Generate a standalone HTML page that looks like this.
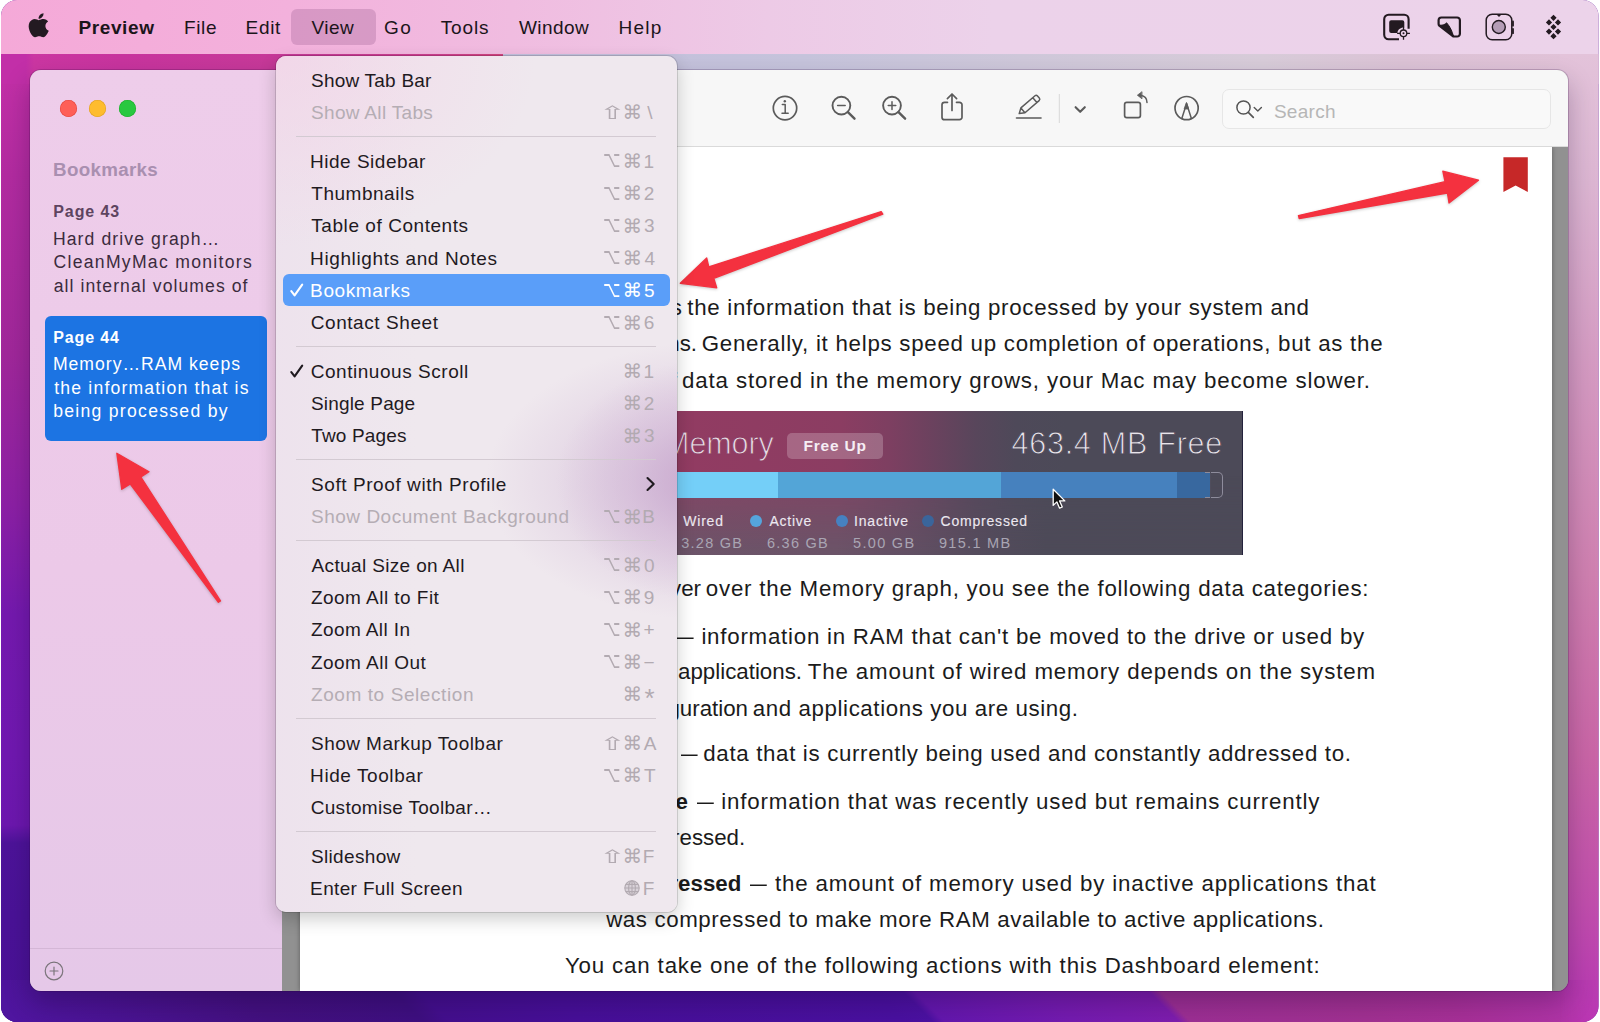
<!DOCTYPE html>
<html lang="en">
<head>
<meta charset="utf-8">
<title>Preview — View menu</title>
<style>
*{box-sizing:border-box;margin:0;padding:0}
html,body{width:1600px;height:1022px;overflow:hidden;background:#fff}
body{font-family:"Liberation Sans",sans-serif;position:relative;color:#1d1d1f}
.abs{position:absolute}
.t{position:absolute;white-space:nowrap;display:block}
svg{position:absolute;overflow:visible}
#screen{position:absolute;left:0;top:0;width:1600px;height:1022px;overflow:hidden;background:#5a1a9a;
  clip-path:inset(0px 1.5px 0px 1px round 16px)}
#wall{position:absolute;left:0;top:0;width:1600px;height:1022px}
#menubar{position:absolute;left:0;top:0;width:1600px;height:54.3px;
  background:linear-gradient(90deg,#f5a9d8 0%,#f3b1dc 18%,#f0bce0 32%,#edcae6 48%,#ecd2ea 62%,#ecd3ea 100%)}
#viewhl{position:absolute;left:290.5px;top:9px;width:85px;height:36px;border-radius:6px;background:rgba(110,50,105,.2)}
#winshadow{position:absolute;left:30px;top:70px;width:1538px;height:921px;border-radius:11px;
  box-shadow:0 0 0 1px rgba(40,0,60,.2),0 12px 26px 0 rgba(20,0,40,.27)}
#win{position:absolute;left:30px;top:70px;width:1538px;height:921px;border-radius:11px;overflow:hidden;background:#919191}
#sidebar{position:absolute;left:0;top:0;width:252.3px;height:921px;background:linear-gradient(180deg,#eecdea 0,#ecc9e8 500px,#e5c8e8 921px)}
#sbline{position:absolute;left:0;top:878px;width:252.3px;height:1px;background:#d4b7d6}
.tl{position:absolute;top:29.5px;width:17px;height:17px;border-radius:50%}
#toolbar{position:absolute;left:253px;top:0;width:1285px;height:77px;background:#f7f7f7;border-bottom:1px solid #dadada}
#docbg{position:absolute;left:253px;top:77px;width:1285px;height:844px;background:#919191}
#page{position:absolute;left:270px;top:77px;width:1252px;height:844px;background:#fff;box-shadow:0 0 5px rgba(0,0,0,.35)}
#sel{position:absolute;left:15px;top:246px;width:222.3px;height:124.5px;border-radius:6px;background:#1c74e3}
#search{position:absolute;left:1191.5px;top:18.5px;width:329px;height:40.5px;border-radius:7px;background:#f9f9f9;border:1px solid #e6e6e6}
#menu{position:absolute;left:275.8px;top:55.5px;width:401.5px;height:856px;border-radius:10px;overflow:hidden;
  background:#efe8ee}
#menushadow{position:absolute;left:275.8px;top:55.5px;width:401.5px;height:856px;border-radius:10px;
  box-shadow:0 0 0 1px rgba(0,0,0,.13),0 7px 18px rgba(0,0,0,.2)}
.sep{position:absolute;left:20.2px;width:360.5px;height:1px;background:#d3cad2}
#hl{position:absolute;left:7.2px;top:218px;width:386.7px;height:32px;border-radius:6px;background:#5a9ef9}
</style>
</head>
<body>
<div id="screen">
<div id="wall">
<div class="abs" style="left:0;top:54px;width:40px;height:968px;background:linear-gradient(180deg,#c530a8 0px,#b22ba0 120px,#a0279a 300px,#8c20a4 450px,#7419ae 560px,#7018b0 700px,#6c17ae 771px,#4d1399 789px,#4a1297 860px,#4a1196 968px)"></div>
<div class="abs" style="left:0;top:54px;width:506px;height:30px;background:linear-gradient(90deg,#c22fa8 0,#c22fa8 26px,#cb36a2 34px,#c8349e 120px,#c73a98 300px,#cd3f8e 440px,#d2457f 506px)"></div>
<div class="abs" style="left:503px;top:54px;width:1097px;height:30px;background:linear-gradient(90deg,#c2bfdc 0,#c6c4dc 300px,#cfc8da 520px,#d8ccd9 760px,#dcc3d6 900px,#e2c2d8 1097px)"></div>
<div class="abs" style="left:1560px;top:54px;width:40px;height:968px;background:linear-gradient(180deg,#e3c3da 0,#dcb5d2 130px,#d59cc3 300px,#cf80b0 520px,#c965a6 700px,#c04eac 850px,#b93cb2 940px,#bd36b6 968px)"></div>
<div class="abs" style="left:0;top:980px;width:1600px;height:42px;-webkit-mask-image:linear-gradient(90deg,#000 0,#000 1560px,transparent 1600px);mask-image:linear-gradient(90deg,#000 0,#000 1560px,transparent 1600px);background:linear-gradient(45deg,#4f159f 15px,#43107f 192px,#3e0f80 300px,#440f8e 318px,#470f98 411px,#4a10a0 640px,#4c11a2 660px,#6417ae 668px,#751bb0 760px,#7e1dae 834px,#9d2f94 842px,#a23192 969px,#a83098 1040px,#b436ae 1146px)"></div>
</div>
<div id="menubar">
<div id="viewhl"></div>
<svg style="left:30.3px;top:12.6px" width="20.500" height="24.500" viewBox="0 0 170 200"><path fill="#231a21" d="M150.4 155.9c-2.9 6.8-6.4 13-10.400 18.800-5.500 7.800-10 13.300-13.500 16.300-5.400 5-11.200 7.500-17.400 7.700-4.500 0-9.800-1.300-16.100-3.800-6.300-2.500-12-3.800-17.300-3.800-5.500 0-11.400 1.300-17.800 3.800-6.300 2.500-11.400 3.900-15.300 4-6 .3-11.900-2.400-17.900-7.900-3.800-3.300-8.600-9-14.300-17.100-6.100-8.600-11.200-18.600-15.100-30-4.200-12.300-6.400-24.300-6.400-35.800 0-13.200 2.900-24.600 8.600-34.200 4.500-7.700 10.500-13.700 18-18.200 7.500-4.400 15.600-6.700 24.300-6.900 4.800 0 11 1.500 18.800 4.400 7.700 2.900 12.700 4.400 14.900 4.400 1.600 0 7.200-1.700 16.500-5.200 8.900-3.200 16.400-4.500 22.500-4 16.600 1.300 29.100 7.900 37.400 19.700-14.900 9-22.200 21.600-22.100 37.800.1 12.600 4.700 23.100 13.700 31.400 4.100 3.900 8.600 6.800 13.700 9-1.100 3.200-2.300 6.200-3.500 9.200zM112.300 4c0 9.900-3.600 19.100-10.800 27.700-8.700 10.200-19.200 16-30.600 15.100-.1-1.200-.2-2.400-.2-3.700 0-9.500 4.100-19.700 11.500-28 3.700-4.200 8.300-7.700 14-10.500 5.600-2.700 11-4.300 16-4.500.1 1.300.1 2.600.1 3.900z"/></svg>
<span class="t" style="left:78.41px;top:14.70px;font-size:19px;line-height:25px;color:#1b151a;font-weight:bold;letter-spacing:0.616px;">Preview</span>
<span class="t" style="left:184.02px;top:14.70px;font-size:19px;line-height:25px;color:#1b151a;letter-spacing:0.613px;">File</span>
<span class="t" style="left:245.52px;top:14.70px;font-size:19px;line-height:25px;color:#1b151a;letter-spacing:0.693px;">Edit</span>
<span class="t" style="left:311.50px;top:14.70px;font-size:19px;line-height:25px;color:#1b151a;letter-spacing:0.476px;">View</span>
<span class="t" style="left:384.11px;top:14.70px;font-size:19px;line-height:25px;color:#1b151a;letter-spacing:1.315px;">Go</span>
<span class="t" style="left:440.70px;top:14.70px;font-size:19px;line-height:25px;color:#1b151a;letter-spacing:0.884px;">Tools</span>
<span class="t" style="left:519.00px;top:14.70px;font-size:19px;line-height:25px;color:#1b151a;letter-spacing:0.438px;">Window</span>
<span class="t" style="left:618.52px;top:14.70px;font-size:19px;line-height:25px;color:#1b151a;letter-spacing:1.226px;">Help</span>
<svg style="left:1380px;top:10px" width="34" height="34" viewBox="0 0 34 34" fill="none" stroke="#231a21">
<path d="M28.600 18.800V9.200a4.400 4.400 0 0 0-4.400-4.400H8.600a4.400 4.400 0 0 0-4.400 4.400v15.600a4.400 4.400 0 0 0 4.400 4.400h10.400" stroke-width="2.100"/>
<path d="M11.200 10.250h11.100a2 2 0 0 1 2 2v5.300c-3.700-.3-6.600 2-6.900 5.450h-6.200a2 2 0 0 1-2-2v-8.750a2 2 0 0 1 2-2z" fill="#231a21" stroke="none"/>
<circle cx="23.500" cy="23.300" r="3.300" stroke-width="1.300"/><circle cx="23.500" cy="23.300" r="1" fill="#231a21" stroke="none"/>
<path d="M23.500 16.900v3.100M23.500 26.600v3.100M17.100 23.300h3.100M26.800 23.300h3.100" stroke-width="1.300"/></svg>
<svg style="left:1434px;top:12px" width="30" height="28" viewBox="0 0 30 28" fill="none" stroke="#231a21" stroke-linejoin="round">
<path d="M4.600 8.300a2.800 2.800 0 0 1 2.800-2.800h15.700a2.800 2.800 0 0 1 2.800 2.800v13.400a2.800 2.800 0 0 1-2.800 2.800H19.500L5.300 13.700a2.600 2.600 0 0 1-.7-1.900z" stroke-width="2.200"/>
<path d="M6 13.200c2.800.2 5-.6 6.600-2.400 3.400 3.800 5.600 8.500 6.800 13.300z" fill="#231a21" stroke-width="1"/></svg>
<svg style="left:1483px;top:11px" width="34" height="32" viewBox="0 0 34 32" fill="none" stroke="#231a21">
<rect x="3.200" y="3.300" width="25.600" height="25.400" rx="6" stroke-width="1.500"/>
<circle cx="15.800" cy="16" r="6.500" fill="#b49db6" stroke-width="1.400"/>
<path d="M13.500 3.500h5l-2.500 2.600z" fill="#231a21" stroke="none"/>
<path d="M30 10.500v4.200M30 18v4.200" stroke-width="1.800" stroke-linecap="round"/></svg>
<svg style="left:0;top:0" width="1600" height="54"><path fill="#231a21" d="M1553.5 14.700000000000001l3.100 3.100l-3.100 3.100l-3.100-3.100zM1553.5 23.9l3.100 3.100l-3.100 3.100l-3.100-3.100zM1553.5 33.1l3.100 3.100l-3.100 3.100l-3.100-3.100zM1549 19.299999999999997l3.100 3.100l-3.100 3.100l-3.100-3.100zM1558 19.299999999999997l3.100 3.100l-3.100 3.100l-3.100-3.100zM1549 28.5l3.100 3.100l-3.100 3.100l-3.100-3.100zM1558 28.5l3.100 3.100l-3.100 3.100l-3.100-3.100z"/></svg>
</div>
<div id="winshadow"></div>
<div id="win">
<div id="docbg"></div>
<div id="page"></div>
<span class="t" style="right:886.0px;top:222.7px;font-size:22.3px;line-height:29px;color:#1b1b1b;">RAM keeps</span>
<span class="t" style="left:657.30px;top:222.70px;font-size:22.3px;line-height:29px;color:#1b1b1b;letter-spacing:0.687px;">the information that is being processed by your system and</span>
<span class="t" style="right:871.0px;top:259.0px;font-size:22.3px;line-height:29px;color:#1b1b1b;">applications.</span>
<span class="t" style="left:671.75px;top:259.00px;font-size:22.3px;line-height:29px;color:#1b1b1b;letter-spacing:0.728px;">Generally, it helps speed up completion of operations, but as the</span>
<span class="t" style="right:891.0px;top:295.6px;font-size:22.3px;line-height:29px;color:#1b1b1b;">amount of</span>
<span class="t" style="left:652.10px;top:295.60px;font-size:22.3px;line-height:29px;color:#1b1b1b;letter-spacing:0.841px;">data stored in the memory grows, your Mac may become slower.</span>
<span class="t" style="right:867.0px;top:504.0px;font-size:22.3px;line-height:29px;color:#1b1b1b;">If you hover</span>
<span class="t" style="left:675.80px;top:504.00px;font-size:22.3px;line-height:29px;color:#1b1b1b;letter-spacing:0.779px;">over the Memory graph, you see the following data categories:</span>
<span class="t" style="right:896.0px;top:551.5px;font-size:22.3px;line-height:29px;color:#1b1b1b;"><b>Wired</b></span>
<span class="t" style="left:647.30px;top:551.50px;font-size:22.3px;line-height:29px;color:#1b1b1b;transform:scaleX(0.744);transform-origin:0 50%;">—</span>
<span class="t" style="left:671.41px;top:551.50px;font-size:22.3px;line-height:29px;color:#1b1b1b;letter-spacing:0.759px;">information in RAM that can't be moved to the drive or used by</span>
<span class="t" style="right:766.0px;top:587.0px;font-size:22.3px;line-height:29px;color:#1b1b1b;">other applications.</span>
<span class="t" style="left:777.65px;top:587.00px;font-size:22.3px;line-height:29px;color:#1b1b1b;letter-spacing:0.866px;">The amount of wired memory depends on the system</span>
<span class="t" style="right:820.0px;top:623.5px;font-size:22.3px;line-height:29px;color:#1b1b1b;">configuration</span>
<span class="t" style="left:722.80px;top:623.50px;font-size:22.3px;line-height:29px;color:#1b1b1b;letter-spacing:0.592px;">and applications you are using.</span>
<span class="t" style="right:892.5px;top:669.0px;font-size:22.3px;line-height:29px;color:#1b1b1b;"><b>Active</b></span>
<span class="t" style="left:650.80px;top:669.00px;font-size:22.3px;line-height:29px;color:#1b1b1b;transform:scaleX(0.744);transform-origin:0 50%;">—</span>
<span class="t" style="left:673.30px;top:669.00px;font-size:22.3px;line-height:29px;color:#1b1b1b;letter-spacing:0.660px;">data that is currently being used and constantly addressed to.</span>
<span class="t" style="right:880.0px;top:717.0px;font-size:22.3px;line-height:29px;color:#1b1b1b;"><b>Inactive</b></span>
<span class="t" style="left:667.00px;top:717.00px;font-size:22.3px;line-height:29px;color:#1b1b1b;transform:scaleX(0.753);transform-origin:0 50%;">—</span>
<span class="t" style="left:691.31px;top:717.00px;font-size:22.3px;line-height:29px;color:#1b1b1b;letter-spacing:0.824px;">information that was recently used but remains currently</span>
<span class="t" style="right:822.8px;top:752.5px;font-size:22.3px;line-height:29px;color:#1b1b1b;">uncompressed.</span>
<span class="t" style="right:826.7px;top:799.2px;font-size:22.3px;line-height:29px;color:#1b1b1b;"><b>Compressed</b></span>
<span class="t" style="left:719.80px;top:799.20px;font-size:22.3px;line-height:29px;color:#1b1b1b;transform:scaleX(0.753);transform-origin:0 50%;">—</span>
<span class="t" style="left:745.00px;top:799.20px;font-size:22.3px;line-height:29px;color:#1b1b1b;letter-spacing:0.818px;">the amount of memory used by inactive applications that</span>
<span class="t" style="left:576.15px;top:835.30px;font-size:22.3px;line-height:29px;color:#1b1b1b;letter-spacing:0.604px;">was compressed to make more RAM available to active applications.</span>
<span class="t" style="left:534.95px;top:881.00px;font-size:22.3px;line-height:29px;color:#1b1b1b;letter-spacing:0.837px;">You can take one of the following actions with this Dashboard element:</span>
<div class="abs" style="left:606px;top:341.2px;width:607px;height:143.6px;background:linear-gradient(90deg,#933b62 0,#8f3c62 120px,#8b3d62 205px,#7d3f61 254px,#6a425e 298px,#58465b 340px,#4e4959 380px,#4c4a58 430px,#4c4a58 100%);box-shadow:inset -1px 0 0 #24223c"></div>
<div class="abs" style="left:606px;top:341.2px;width:606px;height:143.6px;background:linear-gradient(90deg,#6b5569 0,#6a5468 200px,#625064 270px,#554c5d 340px,#4d4a58 410px,#4c4a58 100%);-webkit-mask-image:linear-gradient(180deg,transparent 0,transparent 45%,rgba(0,0,0,.55) 62%,#000 100%);mask-image:linear-gradient(180deg,transparent 0,transparent 45%,rgba(0,0,0,.55) 62%,#000 100%)"></div>
<div class="abs" style="left:622px;top:401.6px;width:126px;height:26px;background:#74cff8"></div>
<div class="abs" style="left:748px;top:401.6px;width:223px;height:26px;background:#53a5d7"></div>
<div class="abs" style="left:971px;top:401.6px;width:176px;height:26px;background:#4681be"></div>
<div class="abs" style="left:1147px;top:401.6px;width:32.5px;height:26px;background:#38689f"></div>
<div class="abs" style="left:1175px;top:401.6px;width:17.5px;height:26px;border:1.2px solid #8e8c9c;border-left:none;border-radius:0 5px 5px 0"></div>
<div class="abs" style="left:1179.5px;top:401.6px;width:1.5px;height:26px;background:#4f4d5c"></div>
<span class="t" style="left:634.12px;top:353.20px;font-size:30.5px;line-height:40px;color:#e6dbe5;letter-spacing:-0.093px;-webkit-text-stroke:.9px #8c3d62;">Memory</span>
<div class="abs" style="left:757px;top:362.6px;width:96px;height:26.5px;border-radius:5px;background:rgba(255,255,255,.22)"></div>
<span class="t" style="left:773.43px;top:366.40px;font-size:15.5px;line-height:20px;color:#f6eef4;font-weight:bold;letter-spacing:0.811px;">Free Up</span>
<span class="t" style="left:981.52px;top:353.40px;font-size:30.5px;line-height:40px;color:#e8e4ea;letter-spacing:0.748px;-webkit-text-stroke:.9px #4d4959;">463.4 MB Free</span>
<div class="abs" style="left:633.7px;top:444.70000000000005px;width:12.6px;height:12.6px;border-radius:50%;background:#79d0f8"></div>
<div class="abs" style="left:719.7px;top:444.70000000000005px;width:12.6px;height:12.6px;border-radius:50%;background:#55a5dc"></div>
<div class="abs" style="left:805.6px;top:444.70000000000005px;width:12.6px;height:12.6px;border-radius:50%;background:#4681c1"></div>
<div class="abs" style="left:891.7px;top:444.70000000000005px;width:12.6px;height:12.6px;border-radius:50%;background:#3a659b"></div>
<span class="t" style="left:653.20px;top:441.80px;font-size:14px;line-height:18px;color:#ece8f0;letter-spacing:0.807px;-webkit-text-stroke:.12px #ece8f0;">Wired</span>
<span class="t" style="left:739.50px;top:441.80px;font-size:14px;line-height:18px;color:#ece8f0;letter-spacing:0.729px;-webkit-text-stroke:.12px #ece8f0;">Active</span>
<span class="t" style="left:823.91px;top:441.80px;font-size:14px;line-height:18px;color:#ece8f0;letter-spacing:0.845px;-webkit-text-stroke:.12px #ece8f0;">Inactive</span>
<span class="t" style="left:910.54px;top:441.80px;font-size:14px;line-height:18px;color:#ece8f0;letter-spacing:0.797px;-webkit-text-stroke:.12px #ece8f0;">Compressed</span>
<span class="t" style="left:651.25px;top:464.00px;font-size:14.5px;line-height:19px;color:#a9a5b3;letter-spacing:1.260px;">3.28 GB</span>
<span class="t" style="left:736.92px;top:464.00px;font-size:14.5px;line-height:19px;color:#a9a5b3;letter-spacing:1.281px;">6.36 GB</span>
<span class="t" style="left:823.05px;top:464.00px;font-size:14.5px;line-height:19px;color:#a9a5b3;letter-spacing:1.310px;">5.00 GB</span>
<span class="t" style="left:909.02px;top:464.00px;font-size:14.5px;line-height:19px;color:#a9a5b3;letter-spacing:1.289px;">915.1 MB</span>
<svg style="left:1015px;top:415px" width="30" height="30" viewBox="1045 485 30 30" ><path d="M1053.200 489.200v16.200l3.700-3.500l2.700 6.300l2.700-1.200l-2.700-6.100h5.200z" fill="#111" stroke="#fff" stroke-width="1.300" stroke-linejoin="round"/></svg>
<svg style="left:1470px;top:85px" width="32" height="40" viewBox="1500 155 32 40" ><path d="M1503.400 157.300h24.400v34.700l-12.200-6.600l-12.200 6.600z" fill="#c62828"/></svg>
<div id="sidebar">
<div class="tl" style="left:29.5px;background:#fe5f57;box-shadow:inset 0 0 0 .6px #e2463f"></div>
<div class="tl" style="left:59.2px;background:#febc2e;box-shadow:inset 0 0 0 .6px #dfa023"></div>
<div class="tl" style="left:89.0px;background:#28c840;box-shadow:inset 0 0 0 .6px #1dad2b"></div>
<span class="t" style="left:23.12px;top:88.30px;font-size:18.8px;line-height:24px;color:#a98fb0;font-weight:bold;letter-spacing:0.292px;">Bookmarks</span>
<span class="t" style="left:23.30px;top:131.00px;font-size:16px;line-height:21px;color:#5e4460;font-weight:bold;letter-spacing:0.902px;">Page 43</span>
<span class="t" style="left:22.92px;top:157.70px;font-size:17.6px;line-height:23px;color:#3b2b3d;letter-spacing:1.099px;">Hard drive graph…</span>
<span class="t" style="left:23.47px;top:181.20px;font-size:17.6px;line-height:23px;color:#3b2b3d;letter-spacing:1.289px;">CleanMyMac monitors</span>
<span class="t" style="left:23.75px;top:204.70px;font-size:17.6px;line-height:23px;color:#3b2b3d;letter-spacing:1.072px;">all internal volumes of</span>
<div id="sel"></div>
<span class="t" style="left:23.30px;top:256.60px;font-size:16px;line-height:21px;color:#fff;font-weight:bold;letter-spacing:0.836px;">Page 44</span>
<span class="t" style="left:22.92px;top:283.00px;font-size:17.6px;line-height:23px;color:#fff;letter-spacing:1.000px;">Memory…RAM keeps</span>
<span class="t" style="left:24.30px;top:306.80px;font-size:17.6px;line-height:23px;color:#fff;letter-spacing:1.181px;">the information that is</span>
<span class="t" style="left:23.20px;top:330.00px;font-size:17.6px;line-height:23px;color:#fff;letter-spacing:1.280px;">being processed by</span>
<div id="sbline"></div>
<svg style="left:14.399999999999999px;top:890.5px" width="20" height="20" viewBox="0 0 20 20" fill="none" stroke="#7b757b" stroke-width="1.200"><circle cx="10" cy="10" r="8.800"/><path d="M10 6v8M6 10h8" stroke-linecap="round"/></svg>
</div>
<div id="toolbar"></div>
<div id="search"></div>
<svg style="left:730px;top:15px" width="520" height="45" viewBox="760 85 520 45" ><g fill="none" stroke="#5b5b5b" stroke-width="1.700" stroke-linecap="round" stroke-linejoin="round">
<circle cx="785" cy="108.100" r="11.700"/>
<path d="M782.300 104.600h2.900v8.300M782 113.200h6.200" stroke-width="1.500"/><circle cx="784.800" cy="101.300" r="1.200" fill="#5b5b5b" stroke="none"/>
<circle cx="841.400" cy="105.600" r="8.900" stroke-width="1.900"/><path d="M847.900 112.100l6.600 6.600" stroke-width="2.400"/><path d="M837.600 105.600h7.600" stroke-width="1.500"/>
<circle cx="892" cy="105.600" r="8.900" stroke-width="1.900"/><path d="M898.500 112.100l6.600 6.600" stroke-width="2.400"/><path d="M888.200 105.600h7.600M892 101.800v7.600" stroke-width="1.500"/>
<path d="M947.500 102.300h-3a2.500 2.500 0 0 0-2.500 2.500v12.400a2.500 2.500 0 0 0 2.500 2.500h15a2.500 2.500 0 0 0 2.500-2.500v-12.400a2.500 2.500 0 0 0-2.500-2.500h-3"/>
<path d="M952 110.400V94.400M947.400 98.600l4.600-4.600l4.600 4.600"/>
<path d="M1016.500 118h24.500" stroke-width="1.600"/>
<path d="M1019.200 113.600l1.700-5.700l14.100-12.100a1.800 1.800 0 0 1 2.500.2l1.800 2.100a1.800 1.800 0 0 1-.2 2.500l-14.100 12.100zM1020.900 107.900l3.800 4.500M1032.800 97.700l3.900 4.500" stroke-width="1.500"/>
<path d="M1075.600 107.200l4.600 4.600l4.600-4.600" stroke-width="2.100"/>
<rect x="1124.600" y="102.300" width="15.800" height="15.400" rx="2.200"/>
<path d="M1147 102.600c0-4.200-2.300-6.700-6.500-7.300" stroke-width="1.500"/><path d="M1141.700 91.900l-4.300 3.300l4.300 3.400z" fill="#5b5b5b" stroke-width=".8"/>
<circle cx="1186.600" cy="108.100" r="11.600"/>
<path d="M1181.900 118.200l4.700-14.800l4.700 14.800" stroke-width="1.500"/><path d="M1186.600 102.800l2.100 6.200h-4.200z" fill="#5b5b5b" stroke-width=".8"/>
<circle cx="1243.500" cy="107.500" r="6.600" stroke="#555" stroke-width="1.500"/><path d="M1248.300 112.300l5 5" stroke="#555" stroke-width="1.700"/><path d="M1254.200 107.400l3.600 3.500l3.600-3.500" stroke="#555" stroke-width="1.400"/>
</g>
<path d="M1059.400 94v29" stroke="#dedede" stroke-width="1.200"/></svg>
<span class="t" style="left:1243.91px;top:28.50px;font-size:19px;line-height:25px;color:#b6b6b6;letter-spacing:0.292px;">Search</span>
</div>
<svg style="left:0;top:0;filter:drop-shadow(0 1.500px 1.500px rgba(0,0,0,.22))" width="1600" height="1022" viewBox="0 0 1600 1022">
<g fill="#f4313f" stroke="#f4313f" stroke-width="1.300" stroke-linejoin="round">
<path d="M881.200 211.600L882.800 214.200L713.800 278.300L716.700 287.800L680.300 283.300L706.700 258L708.800 266.800Z"/>
<path d="M1298.400 215.600L1299.200 218.500L1447.400 193L1449 203L1478.500 180.200L1442.800 171.200L1445 181.700Z"/>
<path d="M218.400 602.300L220.500 600.900L140.900 477L149 471.700L116.800 453.200L121.800 489.300L130.300 484Z"/>
</g></svg>
<div id="menushadow"></div>
<div id="menu">
<div class="abs" style="left:0;top:0;width:402px;height:856px;background:radial-gradient(ellipse 260px 190px at 0px 0px,rgba(244,208,230,.62),rgba(243,212,231,0) 100%),radial-gradient(ellipse 150px 120px at 430px 425px,rgba(196,160,202,.75) 0%,rgba(204,172,209,.4) 50%,rgba(218,195,221,0) 100%),radial-gradient(ellipse 230px 140px at 440px 425px,rgba(205,178,211,.75) 0%,rgba(210,186,215,.45) 50%,rgba(222,203,225,0) 100%),linear-gradient(90deg,rgba(236,222,236,.55),rgba(240,232,238,0) 35%)"></div>
<span class="t" style="left:35.21px;top:12.26px;font-size:19px;line-height:25px;color:#1f1a1f;letter-spacing:0.227px;">Show Tab Bar</span>
<span class="t" style="left:35.21px;top:44.59px;font-size:19px;line-height:25px;color:#b5adb4;letter-spacing:0.321px;">Show All Tabs</span>
<span class="t" style="left:325.49px;top:45.89px;font-size:18.6px;line-height:24px;color:#b2aab1;font-family:'DejaVu Sans','Liberation Sans',sans-serif;transform:scaleX(1.75);transform-origin:3.2px 50%;">⇧</span>
<span class="t" style="left:346.66px;top:44.89px;font-size:19.6px;line-height:25px;color:#b2aab1;font-family:'DejaVu Sans','Liberation Sans',sans-serif;">⌘</span>
<span class="t k" style="left:374.20px;top:44.59px;font-size:19px;line-height:25px;color:#b2aab1;transform:translateX(-50%);">\</span>
<div class="sep" style="top:80.65px"></div>
<span class="t" style="left:34.32px;top:93.09px;font-size:19px;line-height:25px;color:#1f1a1f;letter-spacing:0.494px;">Hide Sidebar</span>
<span class="t" style="left:327.34px;top:94.79px;font-size:17px;line-height:22px;color:#b2aab1;font-family:'DejaVu Sans','Liberation Sans',sans-serif;transform:scale(.885,1.33);transform-origin:1.3px 82%;">⌥</span>
<span class="t" style="left:346.66px;top:93.39px;font-size:19.6px;line-height:25px;color:#b2aab1;font-family:'DejaVu Sans','Liberation Sans',sans-serif;">⌘</span>
<span class="t k" style="left:373.01px;top:93.09px;font-size:19px;line-height:25px;color:#b2aab1;transform:translateX(-50%);">1</span>
<span class="t" style="left:35.50px;top:125.42px;font-size:19px;line-height:25px;color:#1f1a1f;letter-spacing:0.520px;">Thumbnails</span>
<span class="t" style="left:327.34px;top:127.12px;font-size:17px;line-height:22px;color:#b2aab1;font-family:'DejaVu Sans','Liberation Sans',sans-serif;transform:scale(.885,1.33);transform-origin:1.3px 82%;">⌥</span>
<span class="t" style="left:346.66px;top:125.72px;font-size:19.6px;line-height:25px;color:#b2aab1;font-family:'DejaVu Sans','Liberation Sans',sans-serif;">⌘</span>
<span class="t k" style="left:373.31px;top:125.42px;font-size:19px;line-height:25px;color:#b2aab1;transform:translateX(-50%);">2</span>
<span class="t" style="left:35.50px;top:157.75px;font-size:19px;line-height:25px;color:#1f1a1f;letter-spacing:0.557px;">Table of Contents</span>
<span class="t" style="left:327.34px;top:159.45px;font-size:17px;line-height:22px;color:#b2aab1;font-family:'DejaVu Sans','Liberation Sans',sans-serif;transform:scale(.885,1.33);transform-origin:1.3px 82%;">⌥</span>
<span class="t" style="left:346.66px;top:158.05px;font-size:19.6px;line-height:25px;color:#b2aab1;font-family:'DejaVu Sans','Liberation Sans',sans-serif;">⌘</span>
<span class="t k" style="left:373.61px;top:157.75px;font-size:19px;line-height:25px;color:#b2aab1;transform:translateX(-50%);">3</span>
<span class="t" style="left:34.32px;top:190.08px;font-size:19px;line-height:25px;color:#1f1a1f;letter-spacing:0.608px;">Highlights and Notes</span>
<span class="t" style="left:327.34px;top:191.78px;font-size:17px;line-height:22px;color:#b2aab1;font-family:'DejaVu Sans','Liberation Sans',sans-serif;transform:scale(.885,1.33);transform-origin:1.3px 82%;">⌥</span>
<span class="t" style="left:346.66px;top:190.38px;font-size:19.6px;line-height:25px;color:#b2aab1;font-family:'DejaVu Sans','Liberation Sans',sans-serif;">⌘</span>
<span class="t k" style="left:373.90px;top:190.08px;font-size:19px;line-height:25px;color:#b2aab1;transform:translateX(-50%);">4</span>
<div id="hl" style="top:218.65px;height:31.93px"></div>
<svg style="left:14.199999999999989px;top:226.81px" width="14" height="16" viewBox="0 0 14 16"><path d="M1.300 9.200l3.300 4.200L12.200 2.600" fill="none" stroke="#fff" stroke-width="2.100" stroke-linecap="round" stroke-linejoin="round"/></svg>
<span class="t" style="left:34.32px;top:222.41px;font-size:19px;line-height:25px;color:#fff;letter-spacing:0.606px;">Bookmarks</span>
<span class="t" style="left:327.34px;top:224.11px;font-size:17px;line-height:22px;color:#fff;font-family:'DejaVu Sans','Liberation Sans',sans-serif;transform:scale(.885,1.33);transform-origin:1.3px 82%;">⌥</span>
<span class="t" style="left:346.66px;top:222.71px;font-size:19.6px;line-height:25px;color:#fff;font-family:'DejaVu Sans','Liberation Sans',sans-serif;">⌘</span>
<span class="t k" style="left:373.61px;top:222.41px;font-size:19px;line-height:25px;color:#fff;transform:translateX(-50%);">5</span>
<span class="t" style="left:34.91px;top:254.74px;font-size:19px;line-height:25px;color:#1f1a1f;letter-spacing:0.568px;">Contact Sheet</span>
<span class="t" style="left:327.34px;top:256.44px;font-size:17px;line-height:22px;color:#b2aab1;font-family:'DejaVu Sans','Liberation Sans',sans-serif;transform:scale(.885,1.33);transform-origin:1.3px 82%;">⌥</span>
<span class="t" style="left:346.66px;top:255.04px;font-size:19.6px;line-height:25px;color:#b2aab1;font-family:'DejaVu Sans','Liberation Sans',sans-serif;">⌘</span>
<span class="t k" style="left:373.31px;top:254.74px;font-size:19px;line-height:25px;color:#b2aab1;transform:translateX(-50%);">6</span>
<div class="sep" style="top:290.79px"></div>
<svg style="left:14.199999999999989px;top:307.64px" width="14" height="16" viewBox="0 0 14 16"><path d="M1.300 9.200l3.300 4.200L12.200 2.600" fill="none" stroke="#1f1a1f" stroke-width="2.100" stroke-linecap="round" stroke-linejoin="round"/></svg>
<span class="t" style="left:34.91px;top:303.24px;font-size:19px;line-height:25px;color:#1f1a1f;letter-spacing:0.540px;">Continuous Scroll</span>
<span class="t" style="left:346.66px;top:303.54px;font-size:19.6px;line-height:25px;color:#b2aab1;font-family:'DejaVu Sans','Liberation Sans',sans-serif;">⌘</span>
<span class="t k" style="left:373.01px;top:303.24px;font-size:19px;line-height:25px;color:#b2aab1;transform:translateX(-50%);">1</span>
<span class="t" style="left:35.21px;top:335.57px;font-size:19px;line-height:25px;color:#1f1a1f;letter-spacing:0.170px;">Single Page</span>
<span class="t" style="left:346.66px;top:335.87px;font-size:19.6px;line-height:25px;color:#b2aab1;font-family:'DejaVu Sans','Liberation Sans',sans-serif;">⌘</span>
<span class="t k" style="left:373.31px;top:335.57px;font-size:19px;line-height:25px;color:#b2aab1;transform:translateX(-50%);">2</span>
<span class="t" style="left:35.50px;top:367.90px;font-size:19px;line-height:25px;color:#1f1a1f;letter-spacing:0.137px;">Two Pages</span>
<span class="t" style="left:346.66px;top:368.20px;font-size:19.6px;line-height:25px;color:#b2aab1;font-family:'DejaVu Sans','Liberation Sans',sans-serif;">⌘</span>
<span class="t k" style="left:373.61px;top:367.90px;font-size:19px;line-height:25px;color:#b2aab1;transform:translateX(-50%);">3</span>
<div class="sep" style="top:403.95px"></div>
<span class="t" style="left:35.21px;top:416.40px;font-size:19px;line-height:25px;color:#1f1a1f;letter-spacing:0.576px;">Soft Proof with Profile</span>
<svg style="left:369.2px;top:420.80px" width="12" height="16" viewBox="0 0 12 16"><path d="M2.500 2l6.200 6l-6.200 6" fill="none" stroke="#1f1a1f" stroke-width="2.100" stroke-linecap="round" stroke-linejoin="round"/></svg>
<span class="t" style="left:35.21px;top:448.73px;font-size:19px;line-height:25px;color:#b5adb4;letter-spacing:0.516px;">Show Document Background</span>
<span class="t" style="left:327.34px;top:450.43px;font-size:17px;line-height:22px;color:#b2aab1;font-family:'DejaVu Sans','Liberation Sans',sans-serif;transform:scale(.885,1.33);transform-origin:1.3px 82%;">⌥</span>
<span class="t" style="left:346.66px;top:449.03px;font-size:19.6px;line-height:25px;color:#b2aab1;font-family:'DejaVu Sans','Liberation Sans',sans-serif;">⌘</span>
<span class="t k" style="left:372.72px;top:448.73px;font-size:19px;line-height:25px;color:#b2aab1;transform:translateX(-50%);">B</span>
<div class="sep" style="top:484.78px"></div>
<span class="t" style="left:35.80px;top:497.23px;font-size:19px;line-height:25px;color:#1f1a1f;letter-spacing:0.353px;">Actual Size on All</span>
<span class="t" style="left:327.34px;top:498.93px;font-size:17px;line-height:22px;color:#b2aab1;font-family:'DejaVu Sans','Liberation Sans',sans-serif;transform:scale(.885,1.33);transform-origin:1.3px 82%;">⌥</span>
<span class="t" style="left:346.66px;top:497.53px;font-size:19.6px;line-height:25px;color:#b2aab1;font-family:'DejaVu Sans','Liberation Sans',sans-serif;">⌘</span>
<span class="t k" style="left:373.61px;top:497.23px;font-size:19px;line-height:25px;color:#b2aab1;transform:translateX(-50%);">0</span>
<span class="t" style="left:35.21px;top:529.56px;font-size:19px;line-height:25px;color:#1f1a1f;letter-spacing:0.461px;">Zoom All to Fit</span>
<span class="t" style="left:327.34px;top:531.26px;font-size:17px;line-height:22px;color:#b2aab1;font-family:'DejaVu Sans','Liberation Sans',sans-serif;transform:scale(.885,1.33);transform-origin:1.3px 82%;">⌥</span>
<span class="t" style="left:346.66px;top:529.86px;font-size:19.6px;line-height:25px;color:#b2aab1;font-family:'DejaVu Sans','Liberation Sans',sans-serif;">⌘</span>
<span class="t k" style="left:373.31px;top:529.56px;font-size:19px;line-height:25px;color:#b2aab1;transform:translateX(-50%);">9</span>
<span class="t" style="left:35.21px;top:561.89px;font-size:19px;line-height:25px;color:#1f1a1f;letter-spacing:0.398px;">Zoom All In</span>
<span class="t" style="left:327.34px;top:563.59px;font-size:17px;line-height:22px;color:#b2aab1;font-family:'DejaVu Sans','Liberation Sans',sans-serif;transform:scale(.885,1.33);transform-origin:1.3px 82%;">⌥</span>
<span class="t" style="left:346.66px;top:562.19px;font-size:19.6px;line-height:25px;color:#b2aab1;font-family:'DejaVu Sans','Liberation Sans',sans-serif;">⌘</span>
<span class="t k" style="left:373.31px;top:561.89px;font-size:19px;line-height:25px;color:#b2aab1;transform:translateX(-50%);">+</span>
<span class="t" style="left:35.21px;top:594.22px;font-size:19px;line-height:25px;color:#1f1a1f;letter-spacing:0.460px;">Zoom All Out</span>
<span class="t" style="left:327.34px;top:595.92px;font-size:17px;line-height:22px;color:#b2aab1;font-family:'DejaVu Sans','Liberation Sans',sans-serif;transform:scale(.885,1.33);transform-origin:1.3px 82%;">⌥</span>
<span class="t" style="left:346.66px;top:594.52px;font-size:19.6px;line-height:25px;color:#b2aab1;font-family:'DejaVu Sans','Liberation Sans',sans-serif;">⌘</span>
<span class="t k" style="left:373.31px;top:594.22px;font-size:19px;line-height:25px;color:#b2aab1;transform:translateX(-50%);">−</span>
<span class="t" style="left:35.21px;top:626.55px;font-size:19px;line-height:25px;color:#b5adb4;letter-spacing:0.583px;">Zoom to Selection</span>
<span class="t" style="left:346.66px;top:626.85px;font-size:19.6px;line-height:25px;color:#b2aab1;font-family:'DejaVu Sans','Liberation Sans',sans-serif;">⌘</span>
<span class="t k" style="left:373.79px;top:625.75px;font-size:26px;line-height:34px;color:#b2aab1;transform:translateX(-50%);">*</span>
<div class="sep" style="top:662.61px"></div>
<span class="t" style="left:35.21px;top:675.05px;font-size:19px;line-height:25px;color:#1f1a1f;letter-spacing:0.463px;">Show Markup Toolbar</span>
<span class="t" style="left:325.49px;top:676.35px;font-size:18.6px;line-height:24px;color:#b2aab1;font-family:'DejaVu Sans','Liberation Sans',sans-serif;transform:scaleX(1.75);transform-origin:3.2px 50%;">⇧</span>
<span class="t" style="left:346.66px;top:675.35px;font-size:19.6px;line-height:25px;color:#b2aab1;font-family:'DejaVu Sans','Liberation Sans',sans-serif;">⌘</span>
<span class="t k" style="left:374.20px;top:675.05px;font-size:19px;line-height:25px;color:#b2aab1;transform:translateX(-50%);">A</span>
<span class="t" style="left:34.32px;top:707.38px;font-size:19px;line-height:25px;color:#1f1a1f;letter-spacing:0.573px;">Hide Toolbar</span>
<span class="t" style="left:327.34px;top:709.09px;font-size:17px;line-height:22px;color:#b2aab1;font-family:'DejaVu Sans','Liberation Sans',sans-serif;transform:scale(.885,1.33);transform-origin:1.3px 82%;">⌥</span>
<span class="t" style="left:346.66px;top:707.68px;font-size:19.6px;line-height:25px;color:#b2aab1;font-family:'DejaVu Sans','Liberation Sans',sans-serif;">⌘</span>
<span class="t k" style="left:373.90px;top:707.38px;font-size:19px;line-height:25px;color:#b2aab1;transform:translateX(-50%);">T</span>
<span class="t" style="left:34.91px;top:739.72px;font-size:19px;line-height:25px;color:#1f1a1f;letter-spacing:0.301px;">Customise Toolbar…</span>
<div class="sep" style="top:775.77px"></div>
<span class="t" style="left:35.21px;top:788.22px;font-size:19px;line-height:25px;color:#1f1a1f;letter-spacing:0.332px;">Slideshow</span>
<span class="t" style="left:325.49px;top:789.51px;font-size:18.6px;line-height:24px;color:#b2aab1;font-family:'DejaVu Sans','Liberation Sans',sans-serif;transform:scaleX(1.75);transform-origin:3.2px 50%;">⇧</span>
<span class="t" style="left:346.66px;top:788.51px;font-size:19.6px;line-height:25px;color:#b2aab1;font-family:'DejaVu Sans','Liberation Sans',sans-serif;">⌘</span>
<span class="t k" style="left:372.72px;top:788.22px;font-size:19px;line-height:25px;color:#b2aab1;transform:translateX(-50%);">F</span>
<span class="t" style="left:34.32px;top:820.55px;font-size:19px;line-height:25px;color:#1f1a1f;letter-spacing:0.348px;">Enter Full Screen</span>
<svg style="left:348.2px;top:824.95px" width="16" height="16" viewBox="0 0 16 16" fill="none" stroke="#b2aab1" stroke-width="1.100"><circle cx="8" cy="8" r="7.200" fill="#b2aab1" fill-opacity=".35"/><ellipse cx="8" cy="8" rx="3.400" ry="7.200"/><path d="M.8 8h14.400M8 .8v14.400M1.800 4.400h12.400M1.800 11.600h12.400"/></svg>
<span class="t k" style="left:372.72px;top:820.55px;font-size:19px;line-height:25px;color:#b2aab1;transform:translateX(-50%);">F</span>
</div>
</div>
</body>
</html>
